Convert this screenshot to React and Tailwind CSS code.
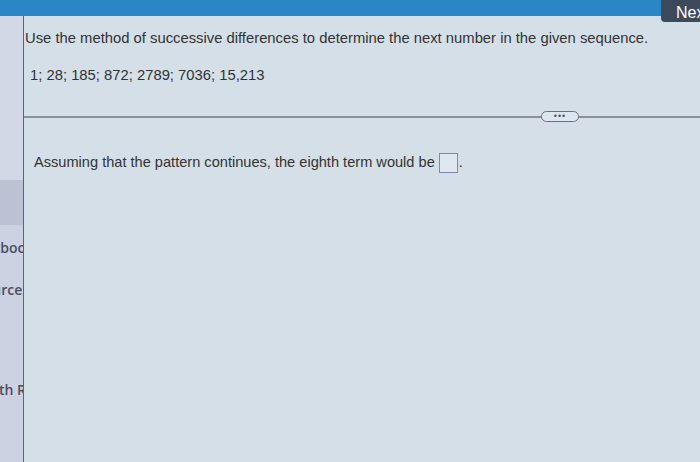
export default function App() {
  return (
    <div className="relative flex h-[462px] w-[700px] flex-col overflow-hidden bg-[#d4dfe7] font-['Liberation_Sans',Arial,sans-serif]">
      {/* top bar */}
      <div className="h-[16px] w-full shrink-0 bg-[#2a86c4]" />

      {/* next button */}
      <div className="absolute right-0 top-0 flex h-[22px] w-[39px] items-start overflow-hidden rounded-bl-[4px] bg-[#3d4a5b] pl-[15px] pt-[1px] text-[16px] text-white">
        <span className="whitespace-nowrap">Next</span>
      </div>

      <div className="flex flex-1">
        {/* sidebar */}
        <div className="flex w-[24px] shrink-0 flex-col overflow-hidden border-r border-[#5d6478] bg-[#ccd2e2] font-['Open_Sans',sans-serif] text-[14px] font-semibold leading-[18px] text-[#4a4f5e]">
          <div className="h-[164px] bg-[#d2d8e6]" />
          <div className="h-[45px] bg-[#bcc2d3]" />
          <div className="mt-[14px] -ml-[37px] whitespace-nowrap">eTextbook</div>
          <div className="mt-[24px] -ml-[40px] whitespace-nowrap">Resource</div>
          <div className="mt-[82px] -ml-[22px] whitespace-nowrap">Math Review</div>
        </div>

        {/* main */}
        <div className="flex flex-1 flex-col text-[#333]">
          <p className="ml-[1px] mt-[12px] whitespace-nowrap text-[14.8px] leading-[20px]">
            Use the method of successive differences to determine the next number in the given sequence.
          </p>
          <p className="ml-[6px] mt-[17px] text-[14.8px] leading-[20px]">1; 28; 185; 872; 2789; 7036; 15,213</p>

          <div className="relative mt-[31px] flex items-center">
            <div className="h-[2px] flex-1 bg-[#8a8e9a]" />
            <div className="absolute left-[517px] top-[-5px] flex h-[11px] w-[38px] items-center justify-center rounded-full border border-[#6b7080] bg-[#dde6f0]">
              <span className="text-[9px] leading-none tracking-[1px] text-[#555]">•••</span>
            </div>
          </div>

          <div className="ml-[10px] mt-[34px] flex items-center text-[14.6px]">
            <span>Assuming that the pattern continues, the eighth term would be</span>
            <span className="ml-[4px] inline-block h-[20px] w-[19px] border border-[#7d8ab0] bg-[#dfe8ef]" />
            <span className="ml-[1px]">.</span>
          </div>
        </div>
      </div>
    </div>
  );
}
